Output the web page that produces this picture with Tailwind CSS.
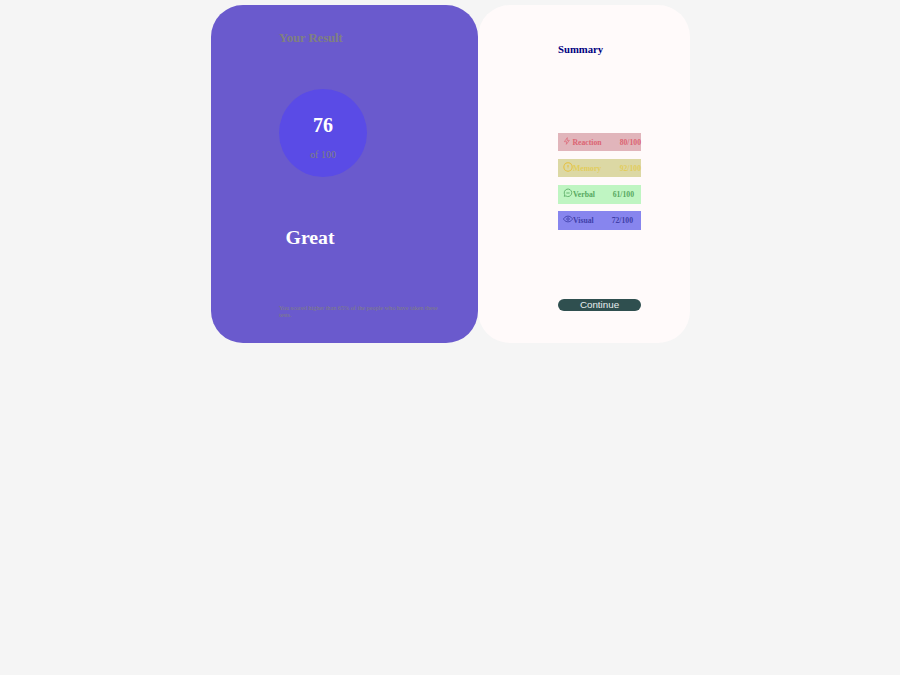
<!DOCTYPE html>
<html><head><meta charset="utf-8"><script src="https://cdn.jsdelivr.net/npm/@tailwindcss/browser@4"></script></head>
<body class="bg-[#f5f5f5] min-h-screen font-['Liberation_Serif',serif]">
<main class="flex justify-center pt-[5px] pl-px">
<section class="w-[267px] h-[337.5px] rounded-[32px] bg-[#6a5acd] pl-[68px] pr-[36px] flex flex-col items-start">
<h1 class="mt-6 text-[12.6px] font-bold leading-[18px] text-[#808080]">Your Result</h1>
<div class="mt-[42px] w-[88px] h-[88px] rounded-full bg-[#5a4be6] flex flex-col items-center text-center">
<div class="mt-[25px] text-xl font-bold leading-[22px] text-white">76</div>
<div class="mt-3 text-[10px] leading-[14px] text-[#808080]">of 100</div>
</div>
<div class="mt-[47px] ml-[6.5px] text-[19.8px] font-bold leading-[26px] text-white">Great</div>
<p class="mt-[53.5px] text-[6.2px] leading-[7px] text-[#808080]">You scored higher than 65% of the people who have taken these tests.</p>
</section>
<section class="w-[212px] h-[337.5px] rounded-[32px] bg-[#fffafa] pl-[80px] pr-[49px] flex flex-col">
<h2 class="mt-[37px] text-[10.7px] font-bold leading-[14px] text-[#000080]">Summary</h2>
<ul class="mt-[77px] flex flex-col gap-[7.7px] text-[7.7px] font-bold leading-[10px]">
<li class="h-[18.4px] bg-[#e1b5bb] text-[#dc6472] flex pl-[5px]">
<svg class="w-2 h-2 mt-[3.5px] shrink-0" viewBox="0 0 24 24" fill="none" stroke="currentColor" stroke-width="2"><path d="M13 2 4 14h7l-1 8 9-12h-7z"/></svg>
<span class="mt-[5px] ml-[1.5px]">Reaction</span><span class="ml-auto mt-[5px] whitespace-nowrap">80/100</span></li>
<li class="h-[18.4px] bg-[#dcd8a4] text-[#e2cd5c] flex pl-[5px]">
<svg class="w-[10px] h-[10px] mt-[3px] shrink-0 text-[#e6bf3c]" viewBox="0 0 24 24" fill="none" stroke="currentColor" stroke-width="2.5"><circle cx="12" cy="12" r="10"/><path d="M12 7v6M12 16v1"/></svg>
<span class="mt-[5px]">Memory</span><span class="ml-auto mt-[5px] whitespace-nowrap">92/100</span></li>
<li class="h-[18.4px] bg-[#bff5c2] text-[#56a860] flex pl-[5px] pr-[7px]">
<svg class="w-[10px] h-[10px] mt-[3px] shrink-0" viewBox="0 0 24 24" fill="none" stroke="currentColor" stroke-width="2"><path d="M3 12a9 9 0 1 1 4 7l-4 1 1-4a9 9 0 0 1-1-4z"/><path d="M8 12h8"/></svg>
<span class="mt-[5px]">Verbal</span><span class="ml-auto mt-[5px] whitespace-nowrap">61/100</span></li>
<li class="h-[18.4px] bg-[#8785ee] text-[#3f3fa8] flex pl-[5px] pr-2">
<svg class="w-[10px] h-[10px] mt-[2.5px] shrink-0" viewBox="0 0 24 24" fill="none" stroke="currentColor" stroke-width="2"><path d="M1 12s4-7 11-7 11 7 11 7-4 7-11 7-11-7-11-7z"/><circle cx="12" cy="12" r="3"/></svg>
<span class="mt-[5px]">Visual</span><span class="ml-auto mt-[5px] whitespace-nowrap">72/100</span></li>
</ul>
<button class="mt-[69.5px] h-3 rounded-full bg-[#2f4f4f] text-[#e8eeee] text-[9.8px] leading-3 font-['Liberation_Sans',sans-serif] font-normal">Continue</button>
</section>
</main>
</body></html>
